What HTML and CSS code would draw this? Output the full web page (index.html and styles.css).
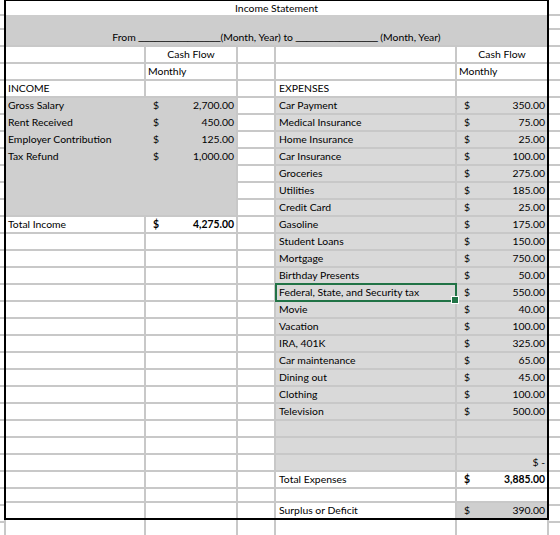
FILE: index.html
```html
<!DOCTYPE html>
<html>
<head>
<meta charset="utf-8">
<link rel="stylesheet" href="styles.css">
</head>
<body>
<div class="frame">
  <div class="title">Income Statement</div>
  <div class="period">From <span class="us">_______________</span>(Month, Year) to <span class="us">_______________</span> (Month, Year)</div>
  <div class="grid">
    <!-- row 1 -->
    <div class="c"></div><div class="c center">Cash Flow</div><div class="c"></div><div class="c"></div><div class="c center">Cash Flow</div>
    <!-- row 2 -->
    <div class="c"></div><div class="c">Monthly</div><div class="c"></div><div class="c"></div><div class="c">Monthly</div>
    <!-- row 3 -->
    <div class="c">INCOME</div><div class="c"></div><div class="c"></div><div class="c d">EXPENSES</div><div class="c"></div>
    <!-- income block rows 4-10 -->
    <div class="income">
      <div class="ic">Gross Salary</div><div class="ic amt"><span>$</span><span>2,700.00</span></div>
      <div class="ic">Rent Received</div><div class="ic amt"><span>$</span><span>450.00</span></div>
      <div class="ic">Employer Contribution</div><div class="ic amt"><span>$</span><span>125.00</span></div>
      <div class="ic">Tax Refund</div><div class="ic amt"><span>$</span><span>1,000.00</span></div>
      <div class="ic"></div><div class="ic"></div>
      <div class="ic"></div><div class="ic"></div>
      <div class="ic"></div><div class="ic"></div>
    </div>
    <div class="c"></div><div class="c g d">Car Payment</div><div class="c g amt2"><span>$</span><span>350.00</span></div>
    <div class="c"></div><div class="c g d">Medical Insurance</div><div class="c g amt2"><span>$</span><span>75.00</span></div>
    <div class="c"></div><div class="c g d">Home Insurance</div><div class="c g amt2"><span>$</span><span>25.00</span></div>
    <div class="c"></div><div class="c g d">Car Insurance</div><div class="c g amt2"><span>$</span><span>100.00</span></div>
    <div class="c"></div><div class="c g d">Groceries</div><div class="c g amt2"><span>$</span><span>275.00</span></div>
    <div class="c"></div><div class="c g d">Utilities</div><div class="c g amt2"><span>$</span><span>185.00</span></div>
    <div class="c"></div><div class="c g d">Credit Card</div><div class="c g amt2"><span>$</span><span>25.00</span></div>
    <!-- row 11 -->
    <div class="c">Total Income</div><div class="c amt b"><span>$</span><span>4,275.00</span></div><div class="c"></div><div class="c g d">Gasoline</div><div class="c g amt2"><span>$</span><span>175.00</span></div>
    <div class="c"></div><div class="c"></div><div class="c"></div><div class="c g d">Student Loans</div><div class="c g amt2"><span>$</span><span>150.00</span></div>
    <div class="c"></div><div class="c"></div><div class="c"></div><div class="c g d">Mortgage</div><div class="c g amt2"><span>$</span><span>750.00</span></div>
    <div class="c"></div><div class="c"></div><div class="c"></div><div class="c g d">Birthday Presents</div><div class="c g amt2"><span>$</span><span>50.00</span></div>
    <div class="c"></div><div class="c"></div><div class="c"></div><div class="c g d sel">Federal, State, and Security tax</div><div class="c g amt2"><span>$</span><span>550.00</span></div>
    <div class="c"></div><div class="c"></div><div class="c"></div><div class="c g d">Movie</div><div class="c g amt2"><span>$</span><span>40.00</span></div>
    <div class="c"></div><div class="c"></div><div class="c"></div><div class="c g d">Vacation</div><div class="c g amt2"><span>$</span><span>100.00</span></div>
    <div class="c"></div><div class="c"></div><div class="c"></div><div class="c g d">IRA, 401K</div><div class="c g amt2"><span>$</span><span>325.00</span></div>
    <div class="c"></div><div class="c"></div><div class="c"></div><div class="c g d">Car maintenance</div><div class="c g amt2"><span>$</span><span>65.00</span></div>
    <div class="c"></div><div class="c"></div><div class="c"></div><div class="c g d">Dining out</div><div class="c g amt2"><span>$</span><span>45.00</span></div>
    <div class="c"></div><div class="c"></div><div class="c"></div><div class="c g d">Clothing</div><div class="c g amt2"><span>$</span><span>100.00</span></div>
    <div class="c"></div><div class="c"></div><div class="c"></div><div class="c g d">Television</div><div class="c g amt2"><span>$</span><span>500.00</span></div>
    <div class="c"></div><div class="c"></div><div class="c"></div><div class="c g d"></div><div class="c g"></div>
    <div class="c"></div><div class="c"></div><div class="c"></div><div class="c g d"></div><div class="c g"></div>
    <div class="c"></div><div class="c"></div><div class="c"></div><div class="c g d"></div><div class="c g right">$ -</div>
    <div class="c"></div><div class="c"></div><div class="c"></div><div class="c d">Total Expenses</div><div class="c amt2 b"><span>$</span><span>3,885.00</span></div>
    <div class="c"></div><div class="c"></div><div class="c"></div><div class="c d"></div><div class="c"></div>
    <div class="c"></div><div class="c"></div><div class="c"></div><div class="c d">Surplus or Deficit</div><div class="c amt2 dark"><span>$</span><span>390.00</span></div>
  </div>
</div>
<div class="below">
  <div class="c"></div><div class="c"></div><div class="c"></div><div class="c"></div><div class="c"></div>
</div>
</body>
</html>
```
FILE: styles.css
```css
* { box-sizing: border-box; }
html, body { margin: 0; padding: 0; }
body {
  width: 560px;
  height: 535px;
  overflow: hidden;
  font-family: Lato, "Liberation Sans", sans-serif;
  font-size: 10.4px;
  color: #000;
  background-color: #fff;
  background-image:
    linear-gradient(#c8c8c8, #c8c8c8),
    linear-gradient(#fff, #fff),
    linear-gradient(to bottom, transparent 15px, #c8c8c8 15px);
  background-repeat: no-repeat, no-repeat, repeat;
  background-size: 100% 2px, 100% 14px, 100% 17px;
  background-position: 0 14px, 0 0, 0 47px;
}
.frame {
  margin-left: 4px;
  width: 545px;
  border: 2px solid #000;
  border-top-width: 1px;
  background: #fff;
}
.title {
  height: 14px;
  line-height: 14px;
  text-align: center;
}
.period {
  height: 30px;
  background: #cdcdcd;
  display: flex;
  align-items: flex-end;
  justify-content: center;
  line-height: 14px;
  padding-bottom: 1px;
  white-space: pre;
}
.us {
  font-family: "Liberation Sans", sans-serif;
  font-size: 10px;
  letter-spacing: -0.1px;
}
.grid {
  display: grid;
  grid-template-columns: 138px 90px 36px 179px 90px;
  grid-template-rows: repeat(26, 15px) 12px 15px;
  gap: 2px;
  padding-top: 2px;
  background: #c8c8c8;
}
.c {
  background: #fff;
  line-height: 15px;
  padding: 0 2px;
  white-space: nowrap;
  overflow: hidden;
}
.d { padding-left: 3px; }
.g { background: #d9d9d9; }
.dark { background: #cfcfcf; }
.center { text-align: center; }
.right { text-align: right; }
.b { font-weight: 700; }
.amt, .amt2 {
  display: flex;
  justify-content: space-between;
  padding: 0 2px 0 7px;
}
.income {
  grid-row: 4 / span 7;
  grid-column: 1 / span 2;
  background: #cfcfcf;
  display: grid;
  grid-template-columns: 138px 90px;
  grid-auto-rows: 15px;
  gap: 2px;
}
.ic {
  line-height: 15px;
  padding: 0 2px;
  white-space: nowrap;
}
.ic.amt { padding: 0 2px 0 7px; }
.sel { position: relative; overflow: visible; }
.sel::after {
  content: "";
  position: absolute;
  left: -1px;
  right: -2px;
  top: -2px;
  bottom: -2px;
  border: 2px solid #217346;
}
.sel::before {
  content: "";
  position: absolute;
  right: -4px;
  bottom: -4px;
  width: 6px;
  height: 6px;
  background: #217346;
  border: 1px solid #fff;
  z-index: 2;
}
.below {
  margin-left: 4px;
  width: 545px;
  height: 15px;
  border-left: 2px solid #c8c8c8;
  border-right: 2px solid #c8c8c8;
  display: grid;
  grid-template-columns: 138px 90px 36px 179px 90px;
  gap: 2px;
  background: #c8c8c8;
}
.below .c { height: 15px; }
```
